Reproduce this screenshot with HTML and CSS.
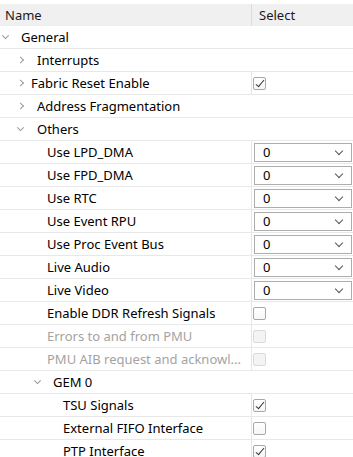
FILE: index.html
```html
<!DOCTYPE html>
<html>
<head>
<meta charset="utf-8">
<link rel="stylesheet" href="styles.css">
</head>
<body>
<div class="tree">
  <div class="header">
    <div class="hname">Name</div>
    <div class="hsel">Select</div>
  </div>

  <div class="row">
    <div class="name l0"><span class="tw down"></span>General</div>
  </div>
  <div class="row">
    <div class="name l1"><span class="tw right"></span>Interrupts</div>
  </div>
  <div class="row">
    <div class="name l1 tight"><span class="tw right"></span>Fabric Reset Enable</div>
    <div class="val"><span class="cb on"></span></div>
  </div>
  <div class="row">
    <div class="name l1"><span class="tw right"></span>Address Fragmentation</div>
  </div>
  <div class="row">
    <div class="name l1"><span class="tw down"></span>Others</div>
  </div>

  <div class="row"><div class="name l2leaf">Use LPD_DMA</div><div class="val"><div class="sel">0<span class="dd"></span></div></div></div>
  <div class="row"><div class="name l2leaf">Use FPD_DMA</div><div class="val"><div class="sel">0<span class="dd"></span></div></div></div>
  <div class="row"><div class="name l2leaf">Use RTC</div><div class="val"><div class="sel">0<span class="dd"></span></div></div></div>
  <div class="row"><div class="name l2leaf">Use Event RPU</div><div class="val"><div class="sel">0<span class="dd"></span></div></div></div>
  <div class="row"><div class="name l2leaf">Use Proc Event Bus</div><div class="val"><div class="sel">0<span class="dd"></span></div></div></div>
  <div class="row"><div class="name l2leaf">Live Audio</div><div class="val"><div class="sel">0<span class="dd"></span></div></div></div>
  <div class="row"><div class="name l2leaf">Live Video</div><div class="val"><div class="sel">0<span class="dd"></span></div></div></div>
  <div class="row"><div class="name l2leaf">Enable DDR Refresh Signals</div><div class="val"><span class="cb"></span></div></div>
  <div class="row"><div class="name l2leaf dis">Errors to and from PMU</div><div class="val"><span class="cb off"></span></div></div>
  <div class="row"><div class="name l2leaf dis">PMU AIB request and acknowl...</div><div class="val"><span class="cb off"></span></div></div>

  <div class="row">
    <div class="name l2"><span class="tw down"></span>GEM 0</div>
  </div>
  <div class="row"><div class="name l3leaf">TSU Signals</div><div class="val"><span class="cb on"></span></div></div>
  <div class="row"><div class="name l3leaf">External FIFO Interface</div><div class="val"><span class="cb"></span></div></div>
  <div class="row"><div class="name l3leaf">PTP Interface</div><div class="val"><span class="cb on"></span></div></div>
</div>
</body>
</html>
```

FILE: styles.css
```css
html, body {
  margin: 0;
  padding: 0;
  background: #ffffff;
}
body {
  font-family: "Noto Sans", "Open Sans", sans-serif;
  font-size: 13px;
  color: #000000;
  width: 353px;
  height: 457px;
  overflow: hidden;
}
.tree {
  padding-top: 4px;
}
.header {
  display: grid;
  grid-template-columns: 251px 1fr;
  height: 22px;
  background: #f0f0f0;
  color: #1a1a1a;
}
.hname {
  display: flex;
  align-items: center;
  padding-left: 5px;
}
.hsel {
  display: flex;
  align-items: center;
  border-left: 1px solid #dcdcdc;
  padding-left: 7px;
}
.row {
  display: grid;
  grid-template-columns: 251px 1fr;
  height: 22px;
  border-bottom: 1px solid #e8e8e8;
}
.name {
  display: flex;
  align-items: center;
  white-space: nowrap;
  overflow: hidden;
  position: relative;
}
.name.l0 { padding-left: 21px; }
.name.l1 { padding-left: 37px; }
.name.l1.tight { padding-left: 31px; }
.name.l2 { padding-left: 53px; }
.l2leaf { padding-left: 47px; }
.l3leaf { padding-left: 63px; }
.dis { color: #a3a3a3; }

.tw {
  position: absolute;
  top: 50%;
}
.tw.down {
  width: 4px;
  height: 4px;
  border-right: 1px solid #999;
  border-bottom: 1px solid #999;
  transform: translateY(-75%) rotate(45deg);
}
.tw.right {
  width: 4px;
  height: 4px;
  border-right: 1px solid #999;
  border-top: 1px solid #999;
  transform: translateY(-50%) rotate(45deg);
}
.l0 .tw.down { left: 3px; }
.l1 .tw.down { left: 18px; }
.l1 .tw.right { left: 18px; }
.l2 .tw.down { left: 35px; }

.val {
  border-left: 1px solid #e5e5e5;
  display: flex;
  align-items: center;
  padding-left: 1px;
}
.sel {
  margin-left: 1px;
  width: 88px;
  height: 17px;
  border: 1px solid #adadad;
  display: flex;
  align-items: center;
  padding-left: 8px;
  box-sizing: content-box;
  position: relative;
  color: #000;
}
.dd {
  position: absolute;
  right: 9px;
  top: 4px;
  width: 5px;
  height: 5px;
  border-right: 1.5px solid #555;
  border-bottom: 1.5px solid #555;
  transform: rotate(45deg);
}
.cb {
  width: 11px;
  height: 11px;
  border: 1px solid #a8a8a8;
  border-radius: 2px;
  background: linear-gradient(#ffffff, #f6f6f6);
  position: relative;
  box-sizing: content-box;
}
.cb.off {
  border-color: #dadada;
  background: #f4f4f4;
}
.cb.on::after {
  content: "";
  position: absolute;
  left: 4px;
  top: 0px;
  width: 3px;
  height: 8px;
  border-right: 1.5px solid #333;
  border-bottom: 1.5px solid #333;
  transform: rotate(40deg);
}
```
